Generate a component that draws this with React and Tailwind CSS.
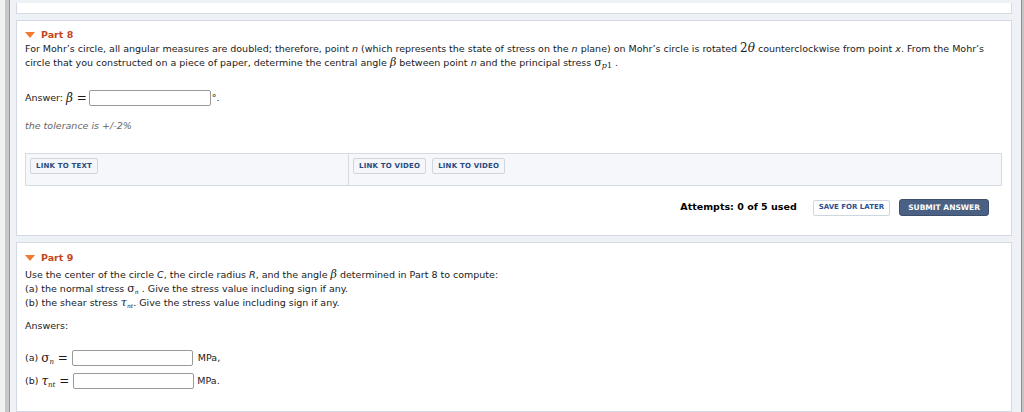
import React from "react";

const sans = { fontFamily: '"DejaVu Sans", Verdana, sans-serif' };
const serif = { fontFamily: '"DejaVu Serif", "Liberation Serif", serif' };

function Tri() {
  return (
    <span className="inline-block w-0 h-0 border-l-[5px] border-r-[5px] border-t-[6px] border-l-transparent border-r-transparent border-t-[#f07a30] mr-[6px]" />
  );
}

function Title({ children }) {
  return (
    <div className="flex items-center h-[14px] text-[9.5px] font-bold text-[#c4461c]">
      <Tri />
      <span>{children}</span>
    </div>
  );
}

function LinkBtn({ children }) {
  return (
    <span className="inline-flex items-center h-[16px] px-[5px] bg-[#f4f6f9] border border-[#cfd6e0] rounded-[2px] text-[7px] font-bold text-[#2b4a80] tracking-[0.2px] leading-none">
      {children}
    </span>
  );
}

function Box({ w }) {
  return <span className={`inline-block h-[16px] border border-[#9a9a9a] rounded-[2px] bg-white ${w}`} />;
}

export default function App() {
  return (
    <div className="flex h-[412px] w-[1024px] overflow-hidden bg-[#eef1f5] text-[#1a1a1a]" style={sans}>
      <div className="w-[5px] bg-[#f0f1f3]" />
      <div className="w-[5px] bg-[#c7c7c7] border-r border-[#989898]" />
      <div className="flex-1 flex flex-col gap-[6px] pt-[3px] pl-[6px] pr-[9px]">
        <div className="h-[11px] bg-white border-x border-b border-[#d4dae3]" />

        <div className="h-[216px] bg-white border border-[#d4dae3] pt-[7px] pl-[8px] pr-[9px] flex flex-col">
          <Title>Part 8</Title>
          <p className="text-[9.5px] leading-[14px]">
            For Mohr’s circle, all angular measures are doubled; therefore, point <i>n</i> (which represents the state of stress on the <i>n</i> plane) on Mohr’s circle is rotated{" "}
            <span style={serif} className="text-[12px] leading-none">2<i>θ</i></span> counterclockwise from point <i>x</i>. From the Mohr’s circle that you constructed on a piece of paper, determine the central angle{" "}
            <i style={serif} className="text-[11px] leading-none">β</i> between point <i>n</i> and the principal stress{" "}
            <span style={serif} className="text-[11px] leading-none">σ<sub className="text-[8px]"><i>p</i>1</sub></span> .
          </p>
          <div className="mt-[20px] flex items-center h-[16px] text-[9.5px]">
            <span>Answer:&nbsp;</span>
            <span style={serif} className="text-[12px] mr-[2px]"><i>β</i> =</span>
            <Box w="w-[122px]" />
            <span className="ml-[1px]">°.</span>
          </div>
          <div className="mt-[13px] h-[14px] leading-[14px] text-[9.5px] italic text-[#666]">the tolerance is +/-2%</div>

          <div className="mt-[20px] h-[33px] flex bg-[#f5f7fa] border border-[#d5dbe3]">
            <div className="w-[323px] border-r border-[#d5dbe3] pl-[4px] pt-[4px] flex items-start">
              <LinkBtn>LINK TO TEXT</LinkBtn>
            </div>
            <div className="flex gap-[6px] pl-[4px] pt-[4px] items-start">
              <LinkBtn>LINK TO VIDEO</LinkBtn>
              <LinkBtn>LINK TO VIDEO</LinkBtn>
            </div>
          </div>

          <div className="mt-[13px] flex items-center justify-end pr-[13px] h-[17px]">
            <span className="text-[9.5px] font-bold text-black mr-[16px]">Attempts: 0 of 5 used</span>
            <span className="inline-flex items-center h-[16px] px-[5px] bg-white border border-[#cfd6e0] rounded-[2px] text-[7px] font-bold text-[#2e4f8f] mr-[9px]">
              SAVE FOR LATER
            </span>
            <span className="inline-flex items-center h-[17px] px-[8px] bg-[#4b6183] border border-[#3d4f6c] rounded-[3px] text-[7.5px] font-bold text-white">
              SUBMIT ANSWER
            </span>
          </div>
        </div>

        <div className="flex-1 bg-white border border-[#d4dae3] pt-[8px] pl-[8px] flex flex-col">
          <Title>Part 9</Title>
          <div className="mt-[3px] text-[9.5px] leading-[14px]">
            <div>
              Use the center of the circle <i>C</i>, the circle radius <i>R</i>, and the angle{" "}
              <i style={serif} className="text-[11px] leading-none">β</i> determined in Part 8 to compute:
            </div>
            <div>
              (a) the normal stress{" "}
              <span style={serif} className="text-[11px] leading-none">σ<sub className="text-[6px]"><i>n</i></sub></span> . Give the stress value including sign if any.
            </div>
            <div className="leading-[13px]">
              (b) the shear stress{" "}
              <span style={serif} className="text-[11px] leading-none"><i>τ</i><sub className="text-[6px]"><i>nt</i></sub></span>. Give the stress value including sign if any.
            </div>
          </div>
          <div className="mt-[10px] text-[9.5px] leading-[14px]">Answers:</div>
          <div className="mt-[17px] flex items-center h-[16px] text-[9.5px]">
            <span>(a)&nbsp;</span>
            <span style={serif} className="text-[12px] mr-[4px]">σ<sub className="text-[7px]"><i>n</i></sub> =</span>
            <Box w="w-[121px]" />
            <span className="ml-[5px]">MPa,</span>
          </div>
          <div className="mt-[7px] flex items-center h-[16px] text-[9.5px]">
            <span>(b)&nbsp;</span>
            <span style={serif} className="text-[12px] mr-[4px]"><i>τ</i><sub className="text-[7px]"><i>nt</i></sub> =</span>
            <Box w="w-[121px]" />
            <span className="ml-[3px]">MPa.</span>
          </div>
        </div>
      </div>
      <div className="w-[3px] bg-[#c4c4c4] border-l border-[#8f8f8f]" />
    </div>
  );
}
